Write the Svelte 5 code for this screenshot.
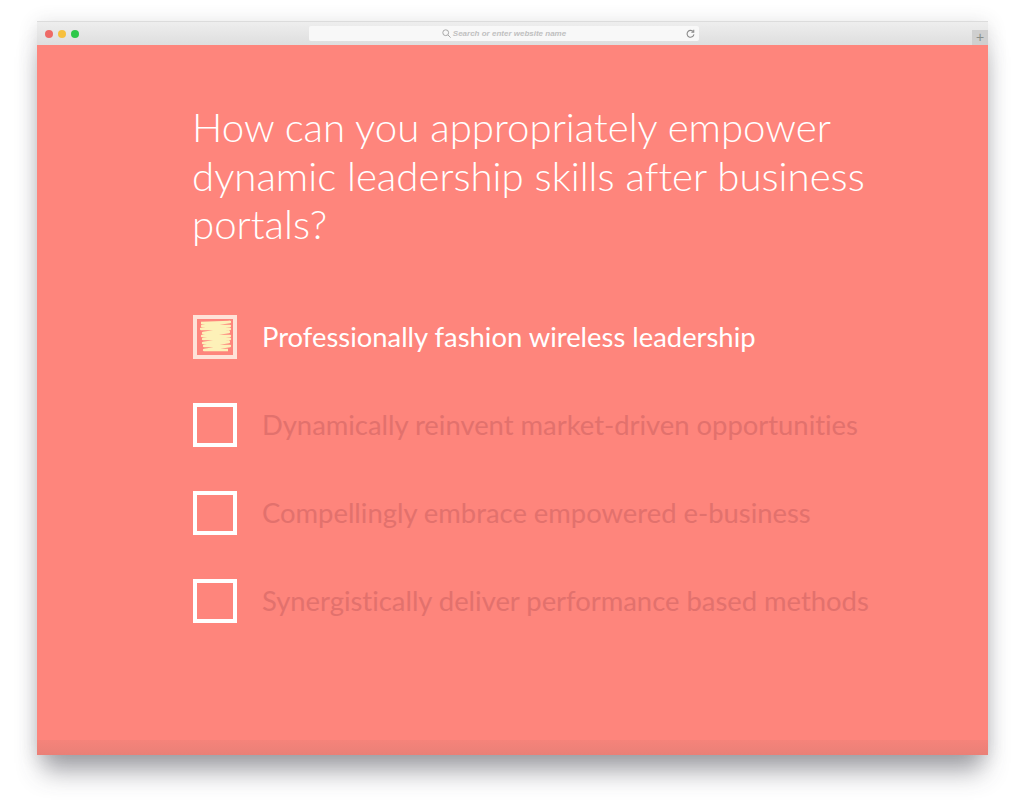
<script>
  const options = [
    { label: 'Professionally fashion wireless leadership', checked: true },
    { label: 'Dynamically reinvent market-driven opportunities', checked: false },
    { label: 'Compellingly embrace empowered e-business', checked: false },
    { label: 'Synergistically deliver performance based methods', checked: false }
  ];
</script>

<div class="page">
  <div class="window">
    <header class="titlebar">
      <div class="dots">
        <span class="dot red"></span>
        <span class="dot yellow"></span>
        <span class="dot green"></span>
      </div>
      <div class="address">
        <span class="search">
          <svg width="9" height="9" viewBox="0 0 9 9" fill="none" stroke="#a8a8a8" stroke-width="1">
            <circle cx="3.7" cy="3.7" r="2.9" />
            <path d="M6 6l2.6 2.6" />
          </svg>
          Search or enter website name
        </span>
        <svg class="reload" width="9" height="9" viewBox="0 0 10 10" fill="none" stroke="#8a8a8a" stroke-width="1.2">
          <path d="M8.2 3.2A3.8 3.8 0 1 0 8.8 6" />
          <path d="M8.6 0.8v2.8H5.9" />
        </svg>
      </div>
      <div class="newtab">+</div>
    </header>

    <main class="content">
      <h1>How can you appropriately empower dynamic leadership skills after business portals?</h1>
      <ul>
        {#each options as option}
          <li class:checked={option.checked}>
            <span class="box">
              {#if option.checked}
                <svg viewBox="0 0 33 33" width="33" height="33" fill="none" stroke="#fdf1b8" stroke-width="2.3" stroke-linejoin="round">
                  <path d="M2 3L31 2L3 6L31 6L2 9L31 9L4 13L30 12L3 16L31 16L4 19L31 19L4 23L30 22L5 26L31 26L5 30L29 30" />
                </svg>
              {/if}
            </span>
            <span class="label">{option.label}</span>
          </li>
        {/each}
      </ul>
    </main>

    <div class="band"></div>
  </div>
</div>

<style>
  :global(body) {
    margin: 0;
    background: #fff;
  }

  .page {
    height: 807px;
    padding: 21px 36px 0 37px;
    box-sizing: border-box;
    overflow: hidden;
    font-family: Lato, "Liberation Sans", sans-serif;
    font-variant-ligatures: none;
  }

  .window {
    height: 734px;
    display: flex;
    flex-direction: column;
    box-shadow: 0 22px 24px -6px rgba(60, 60, 70, 0.45), 0 2px 18px rgba(60, 60, 70, 0.16);
  }

  .titlebar {
    height: 24px;
    flex: none;
    display: flex;
    align-items: center;
    position: relative;
    background: linear-gradient(#eeeeee, #dedede);
    border-top: 1px solid #dcdcdc;
    box-sizing: border-box;
  }

  .dots {
    display: flex;
    gap: 5px;
    margin-left: 8px;
  }

  .dot {
    width: 8px;
    height: 8px;
    border-radius: 50%;
  }

  .red { background: #ee6a66; }
  .yellow { background: #f7c03e; }
  .green { background: #2ec84a; }

  .address {
    position: absolute;
    left: 272px;
    top: 4px;
    width: 390px;
    height: 15px;
    background: #f8f8f8;
    border-radius: 2px;
    display: flex;
    align-items: center;
    justify-content: center;
  }

  .search {
    display: flex;
    align-items: center;
    gap: 2px;
    font-family: "Liberation Sans", sans-serif;
    font-size: 8px;
    font-weight: 700;
    font-style: italic;
    color: #c0c0c0;
  }

  .reload {
    position: absolute;
    right: 4px;
    top: 3px;
  }

  .newtab {
    position: absolute;
    right: 0;
    bottom: 0;
    width: 16px;
    height: 15px;
    background: #cfcfcf;
    color: #8a8f8a;
    font: 14px/15px "Liberation Sans", sans-serif;
    text-align: center;
  }

  .content {
    flex: 1;
    background: #fe857c;
    padding: 58px 100px 0 155px;
  }

  h1 {
    margin: 0 0 66px;
    font-size: 40.2px;
    line-height: 48.5px;
    font-weight: 300;
    color: #fff;
  }

  ul {
    margin: 0;
    padding: 0;
    list-style: none;
    display: grid;
    gap: 44px;
  }

  li {
    display: flex;
    align-items: center;
    gap: 25px;
    padding-left: 1px;
    font-size: 27.4px;
    color: #e2716d;
  }

  li.checked {
    color: #fff;
  }

  .box {
    width: 44px;
    height: 44px;
    flex: none;
    box-sizing: border-box;
    border: 4px solid #fff;
    display: flex;
    align-items: center;
    justify-content: center;
  }

  li.checked .box {
    border-color: #ffe2d8;
  }

  .label {
    white-space: nowrap;
  }

  .band {
    height: 15px;
    flex: none;
    background: linear-gradient(#f5837a, #ea8077);
  }
</style>
